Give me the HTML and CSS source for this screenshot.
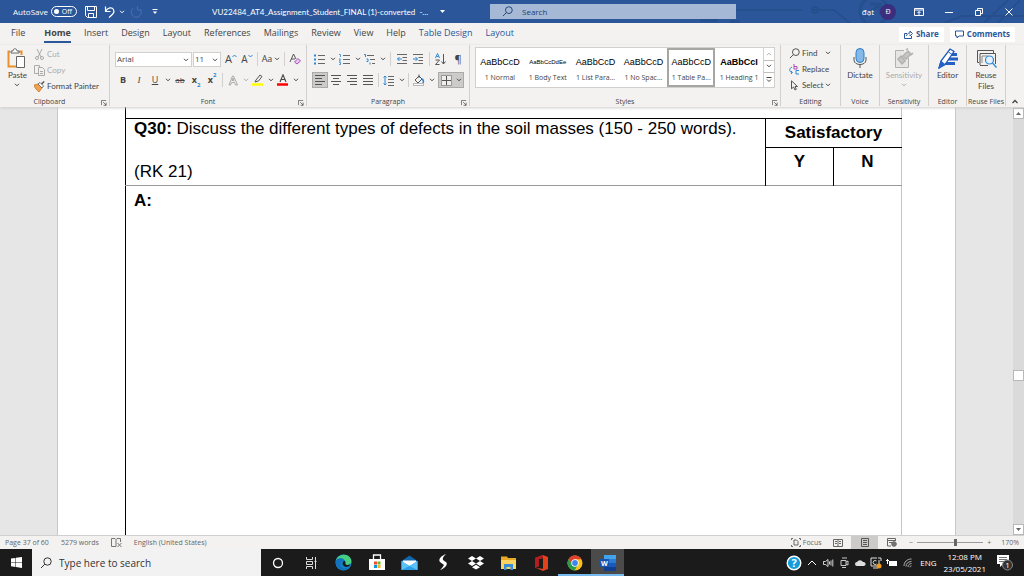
FILE: index.html
```
<!DOCTYPE html>
<html lang="en">
<head>
    <meta charset="UTF-8">
    <meta name="viewport" content="width=device-width, initial-scale=1.0">
    <title>VU22484_AT4_Assignment_Student_FINAL (1)-converted</title>
    <link rel="stylesheet" href="styles.css">
</head>
<body>

    <svg class="sprite" width="0" height="0" aria-hidden="true">
        <symbol id="chev" viewBox="0 0 6 4"><path d="M1 .8 3 2.8 5 .8" fill="none" stroke="currentColor"/></symbol>
        <symbol id="launch" viewBox="0 0 7 7"><path d="M.5 6V.5H6M2.5 2.5 6 6M6 3v3.2H3" fill="none" stroke="currentColor" stroke-width=".8"/></symbol>
        <symbol id="glass" viewBox="0 0 12 12"><circle cx="7.5" cy="4.5" r="3.7" fill="none" stroke="currentColor"/><path d="M4.8 7.2 1 11" stroke="currentColor"/></symbol>
    </svg>

    <header class="titlebar">
        <svg class="circuit" width="330" height="23" viewBox="0 0 330 23" fill="none" stroke="#264f8e" stroke-width="2" aria-hidden="true">
            <path d="M40 10h68M118 10h22l16 13M250 23l18-7h62M290 23l24-23M304 23l22-23"/>
            <circle cx="121" cy="10" r="3"/>
            <circle cx="180" cy="11" r="14" stroke-width="3"/>
            <path d="M171 17 185 5M176 4h10v10" stroke-width="3"/>
            <path d="M6 20h18M36 22h10" stroke-width="4"/>
        </svg>
        <div class="quick">
            <label class="autosave" for="autosave">AutoSave</label>
            <span class="pill"><input type="checkbox" id="autosave">Off</span>
            <button aria-label="Save"><svg width="12" height="12" viewBox="0 0 12 12" fill="none" stroke="#fff"><path d="M.5.5h11v11h-9l-2-2zM2.5.5v4h7v-4M3.5 11.5v-4h5v4"/></svg></button>
            <button class="undo" aria-label="Undo"><svg width="12" height="12" viewBox="0 0 12 12" fill="none" stroke="#fff" stroke-width="1.2"><path d="M1.500.5v5h5M1.5 5.500C4 1 8 1 9.500 3.500c1.500 3-1 5-4.500 8"/></svg></button>
            <button aria-label="Undo list"><svg width="6" height="4"><use href="#chev"/></svg></button>
            <button class="redo" aria-label="Redo" disabled><svg width="12" height="12" viewBox="0 0 12 12" fill="none" stroke="#4a70ad"><path d="M7.500.5v3.500H11M10.500 3.500a5 5 0 1 1-7-1.500"/></svg></button>
            <button class="more" aria-label="Customize toolbar"><svg width="6" height="6" viewBox="0 0 6 6"><path d="M.5.5h5" stroke="#fff"/><path d="M.8 2.500h4.400L3 5z" fill="#fff"/></svg></button>
        </div>
        <div class="doc-name">
            <span>VU22484_AT4_Assignment_Student_FINAL (1)-converted&nbsp; -...</span>
            <button aria-label="File info"><svg width="5" height="3" viewBox="0 0 5 3"><path d="M0 0h5L2.500 3z" fill="#fff"/></svg></button>
        </div>
        <div class="search">
            <svg width="11" height="11"><use href="#glass"/></svg>
            <input type="text" placeholder="Search" aria-label="Search">
        </div>
        <div class="account">
            <span>đạt</span>
            <span class="avatar">Đ</span>
            <button aria-label="Ribbon display options"><svg width="10" height="8" viewBox="0 0 10 8" fill="none" stroke="#fff"><path d="M.5.5h9v7h-9zM.5 2h9M5 7V3.500M3.500 5 5 3.500 6.500 5"/></svg></button>
            <button aria-label="Minimize"><svg width="8" height="8" viewBox="0 0 8 8" stroke="#fff"><path d="M0 4.500h8"/></svg></button>
            <button aria-label="Restore"><svg width="8" height="8" viewBox="0 0 8 8" fill="none" stroke="#fff"><path d="M.5 2.500h5v5h-5zM2.500 2V.5h5v5H6"/></svg></button>
            <button aria-label="Close"><svg width="8" height="8" viewBox="0 0 8 8" stroke="#fff"><path d="m.5.5 7 7M7.500.5l-7 7"/></svg></button>
        </div>
    </header>

    <nav class="tabs">
        <button class="file">File</button>
        <button class="active">Home</button>
        <button>Insert</button>
        <button>Design</button>
        <button>Layout</button>
        <button>References</button>
        <button>Mailings</button>
        <button>Review</button>
        <button>View</button>
        <button>Help</button>
        <button class="context">Table Design</button>
        <button class="context">Layout</button>
        <div class="tab-actions">
            <button><svg width="9" height="9" viewBox="0 0 9 9" fill="none" stroke="#2b579a"><path d="M3 3.500H.5v5h7V6M2.500 6C3 4 4 3 6 3V1l2.500 2.500L6 6V4.500"/></svg>Share</button>
            <button><svg width="9" height="9" viewBox="0 0 9 9" fill="none" stroke="#2b579a"><path d="M.5 1h8v5H4L2 8V6H.5z"/></svg>Comments</button>
        </div>
    </nav>

    <section class="ribbon">
        <div class="group clipboard">
            <div class="group-body">
                <button class="big">
                    <svg width="20" height="21" viewBox="0 0 20 21" fill="none"><path d="M3 3.500H1.500v15H9M12 3.500h2.500V7" stroke="#e8912d" stroke-width="2"/><path d="M4 5V3h2c0-3 4-3 4 0h2v2z" fill="#fff" stroke="#666"/><path d="M9.500 8.500h8v11h-8z" fill="#fff" stroke="#666"/></svg>
                    Paste
                    <svg width="6" height="4"><use href="#chev"/></svg>
                </button>
                <div class="stack">
                    <button disabled><svg width="11" height="11" viewBox="0 0 11 11" fill="none" stroke="#aaa"><path d="M3 0l4 8M8 0 4 8"/><circle cx="3" cy="9" r="1.500"/><circle cx="8" cy="9" r="1.500"/></svg>Cut</button>
                    <button disabled><svg width="11" height="11" viewBox="0 0 11 11" fill="none" stroke="#aaa"><path d="M4 8.500H.5v-8h5V2M4.500 2.500h4l2 2v6h-6zM6 6.500h3M6 8.500h3"/></svg>Copy</button>
                    <button><svg width="11" height="11" viewBox="0 0 11 11"><path d="m0 4 4-1 4 4-3 4C3 9 1 8 0 4z" fill="#f0a24e" stroke="#c5701a" stroke-width=".7"/><path d="m4 3 2-1.500L9.500 5 8 7z" fill="#fff" stroke="#555" stroke-width=".8"/><path d="m7.500 3 2.700-2.500" stroke="#555" stroke-width="1.500"/></svg>Format Painter</button>
                </div>
            </div>
            <footer>Clipboard<button aria-label="Clipboard options"><svg width="6" height="6"><use href="#launch"/></svg></button></footer>
        </div>

        <div class="group font">
            <div class="group-body rows">
                <div class="row">
                    <span class="combo"><select aria-label="Font"><option>Arial</option></select><svg width="6" height="4"><use href="#chev"/></svg></span>
                    <span class="combo size"><select aria-label="Font size"><option>11</option></select><svg width="6" height="4"><use href="#chev"/></svg></span>
                    <button class="tool grow" aria-label="Grow font">A<svg width="5" height="4" viewBox="0 0 5 4" fill="none" stroke="#2b88d8"><path d="M.5 3 2.500 1l2 2"/></svg></button>
                    <button class="tool shrink" aria-label="Shrink font">A<svg width="5" height="4" viewBox="0 0 5 4" fill="none" stroke="#2b88d8"><path d="m.5 1 2 2 2-2"/></svg></button>
                    <i class="rule"></i>
                    <button class="tool case">Aa<svg width="6" height="4"><use href="#chev"/></svg></button>
                    <i class="rule"></i>
                    <button class="tool" aria-label="Clear formatting"><svg width="12" height="12" viewBox="0 0 12 12" fill="none"><path d="M1 9 4.500 1 7 6M2.500 6H6" stroke="#555"/><path d="m5.500 9 3.500-3.500L11.500 8 8 11z" fill="#e8c8ee" stroke="#a94fb8"/></svg></button>
                </div>
                <div class="row">
                    <button class="tool bold">B</button>
                    <button class="tool italic">I</button>
                    <button class="tool underline">U</button>
                    <button class="drop" aria-label="Underline style"><svg width="6" height="4"><use href="#chev"/></svg></button>
                    <button class="tool strike">ab</button>
                    <button class="tool script">x<sub>2</sub></button>
                    <button class="tool script">x<sup>2</sup></button>
                    <i class="rule"></i>
                    <button class="tool" aria-label="Text effects"><svg width="11" height="11" viewBox="0 0 11 11" fill="none" stroke="#aaa"><path d="M1 10 4.500 1h1L9.500 10H7.500L6.500 7.500h-3L2.500 10zM4 5.500h2L5 3z"/></svg></button>
                    <button class="drop pale" aria-label="Text effects list"><svg width="6" height="4"><use href="#chev"/></svg></button>
                    <button class="tool" aria-label="Highlight"><svg width="12" height="12" viewBox="0 0 12 12" fill="none"><path d="M4 6 8 1l2 1.500L6.500 7 3 8z" stroke="#555"/><path d="M0 10.500h11" stroke="#ff0" stroke-width="2.500"/></svg></button>
                    <button class="drop" aria-label="Highlight colours"><svg width="6" height="4"><use href="#chev"/></svg></button>
                    <button class="tool" aria-label="Font colour"><svg width="12" height="12" viewBox="0 0 12 12" fill="none"><path d="M3 8 6 .8 9 8M4 5.500h4" stroke="#444" stroke-width="1.100"/><path d="M0 10.500h11" stroke="#f00" stroke-width="2.500"/></svg></button>
                    <button class="drop" aria-label="Font colours"><svg width="6" height="4"><use href="#chev"/></svg></button>
                </div>
            </div>
            <footer>Font<button aria-label="Font options"><svg width="6" height="6"><use href="#launch"/></svg></button></footer>
        </div>

        <div class="group paragraph">
            <div class="group-body rows">
                <div class="row">
                    <button class="tool" aria-label="Bullets"><svg width="12" height="11" viewBox="0 0 12 11"><path d="M0 1.500h2M0 5.500h2M0 9.500h2" stroke="#2b88d8" stroke-width="2"/><path d="M4 1.500h7M4 5.500h7M4 9.500h7" stroke="#666"/></svg></button>
                    <button class="drop" aria-label="Bullet list"><svg width="6" height="4"><use href="#chev"/></svg></button>
                    <button class="tool" aria-label="Numbering"><svg width="12" height="11" viewBox="0 0 12 11" fill="none"><path d="M0 .5h1.500V3M0 5h1.500L0 7h2M0 8.500h1.500v2H0" stroke="#2b88d8" stroke-width=".8"/><path d="M4 1.500h7M4 5.500h7M4 9.500h7" stroke="#666"/></svg></button>
                    <button class="drop" aria-label="Number formats"><svg width="6" height="4"><use href="#chev"/></svg></button>
                    <button class="tool" aria-label="Multilevel list"><svg width="12" height="11" viewBox="0 0 12 11" fill="none"><path d="M0 .5h1.500V3M2.500 5H4v2.500H2.500M6 8.500v2" stroke="#2b88d8"/><path d="M3 1.500h7M6 5.500h5M8 9.500h3" stroke="#666"/></svg></button>
                    <button class="drop" aria-label="List levels"><svg width="6" height="4"><use href="#chev"/></svg></button>
                    <i class="rule"></i>
                    <button class="tool" aria-label="Decrease indent"><svg width="11" height="10" viewBox="0 0 11 10" fill="none"><path d="M0 .5h10M5.500 3.500H10M5.500 6.500H10M0 9.500h10" stroke="#666"/><path d="M5 5H.5M2.500 3l-2 2 2 2" stroke="#2b88d8"/></svg></button>
                    <button class="tool" aria-label="Increase indent"><svg width="11" height="10" viewBox="0 0 11 10" fill="none"><path d="M0 .5h10M5.500 3.500H10M5.500 6.500H10M0 9.500h10" stroke="#666"/><path d="M0 5h4.500M2.500 3l2 2-2 2" stroke="#2b88d8"/></svg></button>
                    <i class="rule"></i>
                    <button class="tool" aria-label="Sort"><svg width="12" height="12" viewBox="0 0 12 12" fill="none"><path d="M.5 5 2.500.5l2 4.500M1.500 3.500h2" stroke="#2b88d8"/><path d="M.5 7h4l-4 4.500h4M8.500 1v10M6.500 8.500l2 2.500 2-2.500" stroke="#555"/></svg></button>
                    <button class="tool pilcrow" aria-label="Show marks">¶</button>
                </div>
                <div class="row">
                    <button class="tool pressed" aria-label="Align left"><svg width="11" height="10" viewBox="0 0 11 10" stroke="#555"><path d="M0 .5h10M0 3.500h7M0 6.500h10M0 9.500h7"/></svg></button>
                    <button class="tool" aria-label="Center"><svg width="11" height="10" viewBox="0 0 11 10" stroke="#555"><path d="M0 .5h10M2 3.500h6M0 6.500h10M2 9.500h6"/></svg></button>
                    <button class="tool" aria-label="Align right"><svg width="11" height="10" viewBox="0 0 11 10" stroke="#555"><path d="M0 .5h10M3 3.500h7M0 6.500h10M3 9.500h7"/></svg></button>
                    <button class="tool" aria-label="Justify"><svg width="11" height="10" viewBox="0 0 11 10" stroke="#555"><path d="M0 .5h10M0 3.500h10M0 6.500h10M0 9.500h10"/></svg></button>
                    <i class="rule"></i>
                    <button class="tool" aria-label="Line spacing"><svg width="12" height="11" viewBox="0 0 12 11" fill="none"><path d="M2 1v9M.5 2.500 2 1l1.500 1.500M.5 8.500 2 10l1.500-1.500" stroke="#2b88d8"/><path d="M5 1.500h6M5 4.500h6M5 7.500h6M5 10.500h6" stroke="#666"/></svg></button>
                    <button class="drop" aria-label="Spacing list"><svg width="6" height="4"><use href="#chev"/></svg></button>
                    <i class="rule"></i>
                    <button class="tool" aria-label="Shading"><svg width="12" height="12" viewBox="0 0 12 12" fill="none"><path d="M2 6 6 2l3 3-4 4zM6 4V.5" stroke="#555"/><path d="M9 5c2 1 1.500 3 1 4" stroke="#2b88d8" stroke-width="1.500"/><path d="M.5 9.500h10v2H.5z" fill="#fff" stroke="#888" stroke-width=".6"/></svg></button>
                    <button class="drop" aria-label="Shading colours"><svg width="6" height="4"><use href="#chev"/></svg></button>
                    <button class="tool pressed borders" aria-label="Borders"><svg width="11" height="11" viewBox="0 0 11 11" fill="none"><path d="M0 0h11v11H0z" fill="#eee"/><path d="M.5.5h10v10H.5z" stroke="#444" stroke-dasharray="1 1"/><path d="M5.500 1v9M1 5.500h9" stroke="#555"/></svg><svg width="6" height="4"><use href="#chev"/></svg></button>
                </div>
            </div>
            <footer>Paragraph<button aria-label="Paragraph options"><svg width="6" height="6"><use href="#launch"/></svg></button></footer>
        </div>

        <div class="group styles">
            <div class="group-body">
                <div class="gallery">
                    <button><b>AaBbCcD</b>1 Normal</button>
                    <button class="tiny"><b>AaBbCcDdEe</b>1 Body Text</button>
                    <button><b>AaBbCcD</b>1 List Para...</button>
                    <button><b>AaBbCcD</b>1 No Spac...</button>
                    <button class="chosen"><b>AaBbCcD</b>1 Table Pa...</button>
                    <button class="heading"><b>AaBbCcI</b>1 Heading 1</button>
                    <div class="gallery-scroll">
                        <button aria-label="Previous styles" disabled><svg class="flip" width="6" height="4"><use href="#chev"/></svg></button>
                        <button aria-label="Next styles"><svg width="6" height="4"><use href="#chev"/></svg></button>
                        <button aria-label="All styles"><svg width="6" height="6" viewBox="0 0 6 6" fill="none" stroke="currentColor"><path d="M.5.5h5M1 2.500l2 2 2-2"/></svg></button>
                    </div>
                </div>
            </div>
            <footer>Styles<button aria-label="Styles pane"><svg width="6" height="6"><use href="#launch"/></svg></button></footer>
        </div>

        <div class="group editing">
            <div class="group-body">
                <div class="stack">
                    <button><svg width="11" height="11"><use href="#glass"/></svg>Find<svg class="far" width="6" height="4"><use href="#chev"/></svg></button>
                    <button><svg width="11" height="11" viewBox="0 0 11 11" fill="none"><path d="M5 0v5h3V2.500H5" stroke="#a94fb8"/><path d="M3 3C0 4 0 8 3 8.500M2 7l1.500 1.500L2 10M10 6.500H7v3.500h3" stroke="#2b88d8"/></svg>Replace</button>
                    <button><svg width="11" height="11" viewBox="0 0 11 11" fill="none" stroke="#555"><path d="M2.500.8v8L4.500 7 6 10l1.300-.7L6 6.500h2.500z"/></svg>Select<svg width="6" height="4"><use href="#chev"/></svg></button>
                </div>
            </div>
            <footer>Editing</footer>
        </div>

        <div class="group voice">
            <div class="group-body">
                <button class="big"><svg width="14" height="21" viewBox="0 0 14 21" fill="none"><rect x="3" y=".5" width="8" height="14" rx="4" fill="#83b9e8" stroke="#2b7cc4"/><path d="M1 9v3c0 6 12 6 12 0V9M7 16.500V20" stroke="#555"/></svg>Dictate</button>
            </div>
            <footer>Voice</footer>
        </div>

        <div class="group sensitivity">
            <div class="group-body">
                <button class="big" disabled><svg width="20" height="21" viewBox="0 0 20 21" fill="none" stroke="#b3b0ad"><path d="M10 2.500H1.500v17h13V10" fill="#e8e6e4"/><path d="m4 11 3-3 4 5-3 3zM9 8l5-5 3 3-5 5zM12 2l2-1.500M17 7l2-2" fill="#c8c6c4" stroke-width="1.500"/></svg>Sensitivity<svg width="6" height="4"><use href="#chev"/></svg></button>
            </div>
            <footer>Sensitivity</footer>
        </div>

        <div class="group editor">
            <div class="group-body">
                <button class="big"><svg width="20" height="21" viewBox="0 0 20 21"><path d="M12 6.500h7M10 11h10M7 15.500h10" stroke="#2560c4" stroke-width="3"/><path d="M1 20 3 13 12 1l4 2.500L7 16.500z" fill="#fff" stroke="#1d57b8" stroke-width="1.300"/><path d="m10.500 4 3.500 2.500M3 13l4 3.500L1 20z" fill="#2560c4" stroke="#2560c4"/></svg>Editor</button>
            </div>
            <footer>Editor</footer>
        </div>

        <div class="group reuse">
            <div class="group-body">
                <button class="big"><svg width="21" height="21" viewBox="0 0 21 21" fill="none"><path d="M3 14.500H1.500v-12h16V5M4 17V5.500h15.500V16M4 17.500h8" stroke="#555"/><path d="M6 15V8h6" stroke="#888"/><circle cx="13.500" cy="12" r="4" fill="#e4f1fb" stroke="#2b88d8" stroke-width="1.200"/><path d="m16.500 15 4 4.500" stroke="#2b88d8" stroke-width="1.300"/></svg>Reuse<br>Files</button>
            </div>
            <footer>Reuse Files</footer>
        </div>
        <button class="collapse" aria-label="Collapse ribbon"><svg class="flip" width="8" height="5"><use href="#chev"/></svg></button>
    </section>

    <main class="workspace">
        <div class="page">
            <table>
                <colgroup><col><col class="mark"><col class="mark"></colgroup>
                <tr class="previous"><td colspan="3"></td></tr>
                <tr class="question">
                    <td rowspan="2"><p><strong>Q30:</strong> Discuss the different types of defects in the soil masses (150 - 250 words).</p><p>(RK 21)</p></td>
                    <th colspan="2">Satisfactory</th>
                </tr>
                <tr class="choice"><th>Y</th><th>N</th></tr>
                <tr class="answer"><td colspan="3"><strong>A:</strong></td></tr>
            </table>
        </div>
        <div class="scrollbar">
            <button aria-label="Scroll up"><svg width="5" height="3" viewBox="0 0 5 3"><path d="M0 3h5L2.500 0z" fill="#666"/></svg></button>
            <i class="before"></i>
            <button aria-label="Scroll position"></button>
            <i class="after"></i>
            <button aria-label="Scroll down"><svg width="5" height="3" viewBox="0 0 5 3"><path d="M0 0h5L2.500 3z" fill="#666"/></svg></button>
        </div>
    </main>

    <div class="statusbar">
        <span>Page 37 of 60</span>
        <span>5279 words</span>
        <button aria-label="Proofing"><svg width="11" height="9" viewBox="0 0 11 9" fill="none" stroke="#777"><path d="M5 8.500H.5V.5H4l1 1 1-1h3.500V4M5 1.500v7M6.500 5l4 4M10.500 5l-4 4"/></svg></button>
        <span>English (United States)</span>
        <div class="views">
            <button class="focus"><svg width="10" height="9" viewBox="0 0 10 9" fill="none" stroke="#666"><path d="M2 .5H.5V2M.5 7v1.500H2M8 .5h1.500V2M9.500 7v1.500H8M3 2h2.500L7 3.500V7H3z"/></svg>Focus</button>
            <button aria-label="Read mode"><svg width="10" height="8" viewBox="0 0 10 8" fill="none" stroke="#666"><path d="M.5.5h9v7h-9zM5 .5v7M2 2.500h2M2 4.500h2M6 2.500h2M6 4.500h2"/></svg></button>
            <button class="current" aria-label="Print layout"><svg width="8" height="9" viewBox="0 0 8 9" fill="none" stroke="#555"><path d="M.5.5h7v8h-7zM2 2.500h4M2 4.500h4M2 6.500h4"/></svg></button>
            <button aria-label="Web layout"><svg width="10" height="9" viewBox="0 0 10 9" fill="none" stroke="#666"><path d="M4 8H.5V.5h8V3M.5 2.500h8M2 4.500h3"/><circle cx="7" cy="6" r="2.300" fill="#777"/></svg></button>
        </div>
        <div class="zoom">
            <button aria-label="Zoom out">−</button>
            <input type="range" aria-label="Zoom" min="0" max="100" value="58">
            <button aria-label="Zoom in">+</button>
            <span>170%</span>
        </div>
    </div>

    <footer class="taskbar">
        <button class="start" aria-label="Start"><svg width="11" height="11" viewBox="0 0 11 11" fill="#fff"><path d="m0 1.500 4.500-.6V5H0zM5 .8 11 0v5H5zM0 5.600h4.500v4.300L0 9.300zM5 5.600h6V11l-6-.9z"/></svg></button>
        <div class="task-search">
            <svg width="12" height="12"><use href="#glass"/></svg>
            <input type="text" placeholder="Type here to search" aria-label="Type here to search">
        </div>
        <div class="apps">
            <button aria-label="Cortana"><svg width="12" height="12" viewBox="0 0 12 12"><circle cx="6" cy="6" r="4.500" fill="none" stroke="#fff" stroke-width="1.300"/></svg></button>
            <button aria-label="Task view"><svg width="12" height="12" viewBox="0 0 12 12" fill="none" stroke="#ddd"><path d="M1.500 0v2.500h6V0M1.500 4.500h6v3h-6zM1.500 12V9.500h6V12M10.500 0v12M9.500 4.500h2"/></svg></button>
            <button aria-label="Edge"><svg width="17" height="17" viewBox="0 0 17 17"><circle cx="8.500" cy="8.500" r="8" fill="#1684d0"/><path d="M.6 7C2 0 13-2 16 5c1.500 4-1 6-4 6-2 0-2-1-1.500-2C12 5 3 2 .6 7z" fill="#47cf81"/><path d="M.6 7C3 3 9 4 9.500 7 6 7 5 10 6 12c2 3 5 2.500 8 1.500-4 5-14 3-13.400-6.500z" fill="#1272bb"/><path d="M9 7c2 0 1 2 1.500 3 1 1.500 4 1 5 0-1 4-7 4-8 0 0-1 .5-2.500 1.500-3z" fill="#1b1b1b"/></svg></button>
            <button aria-label="Store"><svg width="16" height="17" viewBox="0 0 16 17"><path d="M0 5h16v11H0z" fill="#fff"/><path d="M4.500 5V1h7v4" fill="none" stroke="#fff" stroke-width="1.300"/><path d="M5 7.500h3v3H5z" fill="#e8502d"/><path d="M8.500 7.500h3v3h-3z" fill="#70b52b"/><path d="M5 11h3v3H5z" fill="#1695dc"/><path d="M8.500 11h3v3h-3z" fill="#f6b51b"/></svg></button>
            <button aria-label="Mail"><svg width="17" height="16" viewBox="0 0 17 16"><path d="M.5 6 8.500.5l8 5.500z" fill="#1266ad"/><path d="M.5 6h16v9H.5z" fill="#2b9eea"/><path d="M2 5.500h13V7l-6.500 4L2 7z" fill="#fff"/><path d="m.5 6 8 5-8 4zM16.500 6l-8 5 8 4z" fill="#5cc2fa"/></svg></button>
            <button aria-label="Scrivener"><svg width="10" height="17" viewBox="0 0 10 17"><path d="M8 0C3 2 0 5 2 8l4 3c-1 2-2 3-4 5 4-1 8-5 6.500-7.500L5 6C4 4 6 2 8 0z" fill="#fff"/></svg></button>
            <button aria-label="Dropbox"><svg width="16" height="14" viewBox="0 0 16 14" fill="#fff"><path d="m4 0 4 2.400-4 2.500L0 2.400zM12 0l4 2.400-4 2.500-4-2.500zM4 5l4 2.500-4 2.500-4-2.500zM12 5l4 2.500-4 2.500-4-2.500zM8 8.700l4 2.500L8 13.600l-4-2.400z"/></svg></button>
            <button aria-label="File Explorer"><svg width="15" height="14" viewBox="0 0 15 14"><path d="M0 .5h6l1 1.500h8v11H0z" fill="#e9ab27"/><path d="M0 4h15v9H0z" fill="#fcd462"/><path d="M3 14V8h9v6H9.500v-3h-4v3z" fill="#3a8fd6"/></svg></button>
            <button aria-label="Office"><svg width="13" height="16" viewBox="0 0 13 16"><path d="m0 3 8-3 5 2v12l-5 2-7-3 7 .8V3L4 4v7l-4 2z" fill="#e3401b"/><path d="M8 0 0 3v10l4-2V4l4-1z" fill="#b41c20"/></svg></button>
            <button class="running" aria-label="Chrome"><svg width="16" height="16" viewBox="0 0 16 16"><circle cx="8" cy="8" r="7.500" fill="#fbc116"/><path d="M1.500 4.200A7.500 7.500 0 0 1 14.500 4.200H8L5 9.500z" fill="#df3e31"/><path d="M1.500 4.200A7.500 7.500 0 0 0 7.500 15.500l3.300-5.500-3-.5-2.800-.2z" fill="#299b4c"/><circle cx="8" cy="8" r="3.700" fill="#fff"/><circle cx="8" cy="8" r="2.900" fill="#4084ef"/></svg></button>
            <button class="running front" aria-label="Word"><svg width="16" height="16" viewBox="0 0 16 16"><path d="M4 0h12v5H4z" fill="#41a5ee"/><path d="M4 4h12v4H4z" fill="#2b7cd3"/><path d="M4 8h12v4H4z" fill="#185abd"/><path d="M4 12h12v4H4z" fill="#103f91"/><path d="M0 4h9v8H0z" fill="#1752af"/><text x="4.500" y="10.500" font-size="7" font-weight="700" fill="#fff" text-anchor="middle" font-family="Open Sans, sans-serif">W</text></svg></button>
        </div>
        <div class="tray">
            <button aria-label="Help"><svg width="16" height="16" viewBox="0 0 16 16"><circle cx="8" cy="8" r="6.800" fill="#149dd9" stroke="#fff" stroke-width="1.400"/><text x="8" y="12" font-size="11" font-weight="700" fill="#fff" text-anchor="middle" font-family="Open Sans, sans-serif">?</text></svg></button>
            <button aria-label="Hidden icons"><svg width="10" height="6" viewBox="0 0 10 6" fill="none" stroke="#fff"><path d="m1 5 4-4 4 4"/></svg></button>
            <button aria-label="Volume"><svg width="11" height="10" viewBox="0 0 11 10" fill="none" stroke="#fff" stroke-width=".8"><path d="M.5 3.500h2l2.500-2v7l-2.500-2h-2zM6.500 3.500v3M8 2.500v5M9.800 1.500v7"/></svg></button>
            <button aria-label="Meet now"><svg width="9" height="11" viewBox="0 0 9 11" fill="none" stroke="#ddd" stroke-width=".9"><path d="M2 1h5M1 3.500h5v5H1zM6 5l2-1v4L6 7M2 10.500h4"/></svg></button>
            <button aria-label="OneDrive"><svg width="11" height="7" viewBox="0 0 11 7" fill="#ddd"><path d="M2 7a2 2 0 0 1 0-4 3.500 3.500 0 0 1 6 0 2 2 0 0 1 1 4z"/></svg></button>
            <button aria-label="Windows Update"><svg width="12" height="12" viewBox="0 0 12 12" fill="none"><path d="M7 1H1v8h6M3 11h5M9 3v4M6.500 4a2 2 0 1 0 0 3M8 1h3v3" stroke="#ddd"/><circle cx="9" cy="9" r="2.500" fill="#f39a1d"/></svg></button>
            <button aria-label="Battery"><svg width="12" height="8" viewBox="0 0 12 8"><path d="M3 2h8v5H3z" fill="#fff"/><path d="M0 1.500h3M1.500 0v5" stroke="#fff"/></svg></button>
            <button aria-label="Network"><svg width="10" height="10" viewBox="0 0 10 10" fill="none" stroke="#bbb" stroke-width=".9"><path d="M1 8C1 4 4 1 8.500 1M3 8.500C3 5.500 5 3.500 8.500 3.500M5 9c0-2 1.500-3.500 3.500-3.500M7 9.300c0-1 .5-1.500 1.500-1.500"/></svg></button>
            <span class="lang">ENG</span>
            <time>12:08 PM<br>23/05/2021</time>
            <button class="notice" aria-label="Notifications"><svg width="16" height="17" viewBox="0 0 16 17"><path d="M0 1h12v9H6l-3 3v-3H0z" fill="#fff"/><path d="M2 3.500h8M2 5.500h8M2 7.500h6" stroke="#333" stroke-width=".7"/><circle cx="10.500" cy="11" r="5" fill="#333" stroke="#888"/><text x="10.500" y="14" font-size="8" fill="#fff" text-anchor="middle" font-family="Open Sans, sans-serif">1</text></svg></button>
        </div>
    </footer>

</body>
</html>
```
FILE: styles.css
```
* {
    box-sizing: border-box;
}

body {
    margin: 0;
    height: 100vh;
    display: flex;
    flex-direction: column;
    overflow: hidden;
    background: #e6e6e6;
    color: #444;
    font-family: "Open Sans", "Noto Sans", sans-serif;
    font-size: 8px;
    line-height: 10px;
}

button, input, select {
    margin: 0;
    padding: 0;
    border: 0;
    background: none;
    color: inherit;
    font: inherit;
}

button {
    display: flex;
    align-items: center;
    justify-content: center;
    white-space: nowrap;
}

svg {
    display: block;
    flex: none;
}

.sprite {
    position: absolute;
}

.flip {
    transform: rotate(180deg);
}

/* title bar */
.titlebar {
    position: relative;
    flex: none;
    display: grid;
    grid-template-columns: 212px 278px 24% 1fr;
    align-items: center;
    height: 23px;
    background: #2b579a;
    color: #fff;
}

.circuit {
    position: absolute;
    top: 0;
    right: 0;
}

.quick {
    display: flex;
    align-items: center;
    padding-left: 13px;
}

.pill {
    display: flex;
    align-items: center;
    justify-content: space-between;
    width: 26px;
    height: 11px;
    margin: 0 8px 0 3px;
    padding: 0 4px 0 2px;
    border: 1px solid #fff;
    border-radius: 6px;
    font-size: 7px;
}

.pill input {
    appearance: none;
    width: 5px;
    height: 5px;
    border-radius: 50%;
    background: #fff;
}

.quick .undo {
    margin: 0 3px 0 7px;
}

.quick .redo {
    margin: 0 10px 0 5px;
}

.doc-name {
    display: flex;
    align-items: center;
    gap: 12px;
    font-family: Lato, "Open Sans", sans-serif;
    white-space: nowrap;
}

.search {
    position: relative;
    display: flex;
    align-items: center;
    gap: 9px;
    height: 15px;
    padding-left: 12px;
    background: #a5b9d6;
    color: #1d3f73;
}

.search input {
    flex: 1;
    min-width: 0;
}

input::placeholder {
    color: inherit;
    opacity: 1;
}

.account {
    position: relative;
    display: flex;
    align-items: center;
    justify-content: flex-end;
}

.account button {
    width: 30px;
}

.avatar {
    width: 16px;
    margin: 0 8px 0 6px;
    border-radius: 50%;
    background: #3b2e7e;
    font-size: 7px;
    line-height: 16px;
    text-align: center;
}

/* tabs */
.tabs {
    flex: none;
    display: flex;
    align-items: center;
    gap: 13px;
    height: 22px;
    padding: 0 9px 0 11px;
    background: #f3f2f1;
    font-size: 9px;
}

.tabs > button {
    height: 18px;
    border-bottom: 2px solid transparent;
}

.tabs .file {
    margin-right: 6px;
}

.tabs .active {
    border-bottom-color: #2b579a;
    font-weight: 700;
}

.tabs .context {
    color: #2b579a;
}

.tab-actions {
    display: flex;
    gap: 6px;
    margin-left: auto;
}

.tab-actions button {
    gap: 3px;
    height: 15px;
    padding: 0 5px;
    background: #fff;
    color: #2b579a;
    font-size: 8px;
    font-weight: 700;
}

/* ribbon */
.ribbon {
    position: relative;
    flex: none;
    display: flex;
    height: 62px;
    background: #f3f2f1;
    box-shadow: 0 1px 3px #ccc;
}

.group {
    flex: none;
    display: flex;
    flex-direction: column;
    height: 61px;
    border-right: 1px solid #d2d0ce;
}

.group-body {
    flex: 1;
    display: flex;
}

.group > footer {
    position: relative;
    font-size: 7px;
    line-height: 8px;
    text-align: center;
    white-space: nowrap;
}

.group > footer button {
    position: absolute;
    right: 2px;
    bottom: 0;
}

.clipboard { width: 110px; padding-right: 10px; }
.font { width: 197px; }
.paragraph { width: 163px; }
.styles { flex: 1; }
.editing { width: 60px; }
.voice { width: 39px; }
.sensitivity { width: 49px; }
.editor { width: 38px; }
.reuse { width: 39px; }

.clipboard > footer button {
    right: -8px;
}

.big {
    flex-direction: column;
    justify-content: flex-start;
    width: 100%;
    padding-top: 3px;
    font-family: Lato, "Open Sans", sans-serif;
    line-height: 11px;
}

.big > svg:first-child {
    margin-bottom: 1px;
}

.big > svg:last-child:not(:first-child) {
    margin-top: 2px;
}

button:disabled {
    color: #aaa;
}

.clipboard .big {
    width: 35px;
    margin-left: 1px;
}

.stack {
    display: flex;
    flex-direction: column;
    justify-content: flex-start;
    padding-top: 1px;
    font-family: Lato, "Open Sans", sans-serif;
}

.stack button {
    justify-content: flex-start;
    gap: 2px;
    height: 16px;
}

.editing .stack {
    padding: 0 0 0 8px;
}

.far {
    margin-left: 6px;
}

.rows {
    flex-direction: column;
    gap: 5px;
    padding: 6px 0 0 5px;
}

.row {
    display: flex;
    align-items: center;
    height: 16px;
}

.combo {
    position: relative;
    width: 77px;
    height: 15px;
    margin-right: 1px;
    border: 1px solid #d2d0ce;
    background: #fff;
}

.combo.size {
    width: 28px;
    margin-right: 2px;
}

.combo select {
    appearance: none;
    display: block;
    width: 100%;
    height: 13px;
    padding-left: 1px;
}

.combo svg {
    position: absolute;
    top: 5px;
    right: 2px;
    pointer-events: none;
}

.tool {
    width: 16px;
    height: 16px;
    font-size: 9px;
}

.drop {
    width: 9px;
    height: 16px;
}

.pale {
    color: #aaa;
}

.rule {
    width: 1px;
    height: 14px;
    margin: 0 2px;
    background: #d2d0ce;
}

.grow,
.shrink {
    align-items: flex-start;
    font-size: 11px;
    line-height: 16px;
}

.shrink {
    font-size: 10px;
}

.grow svg,
.shrink svg {
    margin-top: 3px;
}

.case {
    gap: 2px;
    width: 22px;
}

.bold {
    font-weight: 700;
}

.italic {
    font-family: "Liberation Serif", serif;
    font-style: italic;
}

.underline {
    text-decoration: underline;
}

.strike {
    font-size: 8px;
    text-decoration: line-through;
}

.script {
    font-weight: 700;
}

.script sub,
.script sup {
    color: #2b88d8;
    font-size: 6px;
    line-height: 6px;
}

.script sub {
    align-self: flex-end;
}

.script sup {
    align-self: flex-start;
}

.pilcrow {
    width: 18px;
    font-size: 11px;
}

.paragraph .row:first-child .rule {
    margin: 0 3px;
}

.pressed {
    border: 1px solid #aaa;
    background: #cdcbc9;
}

.borders {
    gap: 4px;
    width: 26px;
    margin-left: 2px;
}

.gallery {
    flex: 1;
    display: grid;
    grid-template-columns: repeat(6, 1fr) 11px;
    height: 41px;
    margin: 2px 5px 0;
    border: 1px solid #d2d0ce;
    background: #fff;
}

.gallery > button {
    flex-direction: column;
    align-items: stretch;
    gap: 6px;
    min-width: 0;
    padding: 4px 2px 0;
    border: 2px solid transparent;
    font-size: 7px;
}

.gallery b {
    color: #000;
    font-family: "Liberation Sans", Arial, sans-serif;
    font-size: 9px;
    font-weight: 400;
}

.gallery .tiny b {
    font-size: 6px;
}

.gallery .heading b {
    font-weight: 700;
}

.gallery .chosen {
    border-color: #a6a6a2;
}

.gallery-scroll {
    display: grid;
    border-left: 1px solid #d2d0ce;
}

.gallery-scroll button + button {
    border-top: 1px solid #c0bebc;
}

.collapse {
    align-self: flex-end;
    width: 18px;
    height: 12px;
}

/* document */
.workspace {
    flex: 1;
    min-height: 0;
    display: flex;
    padding-left: 57px;
}

.page {
    flex: 1;
    display: flex;
    margin-right: 57px;
    padding: 0 53px 0 67px;
    border: solid #c8c8c8;
    border-width: 0 1px;
    background: #fff;
}

.page table {
    width: 100%;
    height: 100%;
    border-collapse: collapse;
    table-layout: fixed;
    border-left: 1px solid #000;
    border-right: 1px solid #c4c4c4;
    color: #000;
    font-family: "Liberation Sans", Arial, sans-serif;
    font-size: 17px;
    line-height: 20px;
}

.mark {
    width: 68px;
}

.page td,
.page th {
    padding: 0 8px;
    vertical-align: top;
}

.page p {
    margin: 0 0 23px;
    white-space: nowrap;
}

.page p:last-child {
    margin: 0;
}

.previous td {
    height: 11px;
}

.question td,
.question th {
    border-top: 1px solid #000;
}

.question th,
.choice th {
    height: 29px;
    padding: 4px 0 0;
    border-left: 1px solid #000;
}

.choice th {
    height: 38px;
    border-top: 1px solid #000;
}

.answer td {
    padding-top: 5px;
    border-top: 1px solid #999;
}

.scrollbar {
    display: flex;
    flex-direction: column;
    width: 11px;
    padding-top: 1px;
    background: #dadada;
}

.scrollbar button {
    height: 11px;
    border: 1px solid #b8b8b8;
    background: #fff;
}

.before { flex: 7; }
.after { flex: 4; }

/* status bar */
.statusbar {
    flex: none;
    display: flex;
    align-items: center;
    gap: 12px;
    height: 14px;
    padding: 0 5px;
    border-top: 1px solid #d2d0ce;
    background: #f3f2f1;
    color: #666;
    font-size: 7px;
}

.views {
    display: flex;
    align-self: stretch;
    margin-left: auto;
}

.views button {
    width: 27px;
}

.views .focus {
    width: 36px;
    gap: 2px;
}

.views .current {
    background: #cdcbc9;
}

.zoom {
    display: flex;
    align-items: center;
    gap: 4px;
    margin-left: -8px;
}

.zoom span {
    margin-left: 6px;
}

.zoom input {
    appearance: none;
    width: 66px;
    height: 8px;
    background: linear-gradient(#999, #999) center / 100% 1px no-repeat;
}

.zoom input::-webkit-slider-thumb {
    appearance: none;
    width: 3px;
    height: 7px;
    background: #666;
}

/* taskbar */
.taskbar {
    flex: none;
    display: flex;
    height: 27px;
    background: #1b1b1b;
    color: #fff;
}

.start {
    width: 32px;
}

.task-search {
    display: flex;
    align-items: center;
    gap: 7px;
    width: 229px;
    padding-left: 8px;
    background: #f2f2f2;
    color: #333;
    font-size: 10px;
}

.apps {
    display: flex;
}

.apps button {
    width: 33px;
    padding-top: 2px;
    border-bottom: 2px solid transparent;
}

.apps .running {
    border-bottom-color: #76b9ed;
}

.apps .front {
    background: #4b4b4b;
}

.tray {
    display: flex;
    align-items: center;
    margin-left: auto;
}

.tray button {
    width: 16px;
}

.tray button:first-child {
    margin-right: 2px;
}

.lang {
    margin: 0 7px 0 4px;
}

.tray time {
    line-height: 12px;
    text-align: center;
}

.tray .notice {
    width: 38px;
}
```
